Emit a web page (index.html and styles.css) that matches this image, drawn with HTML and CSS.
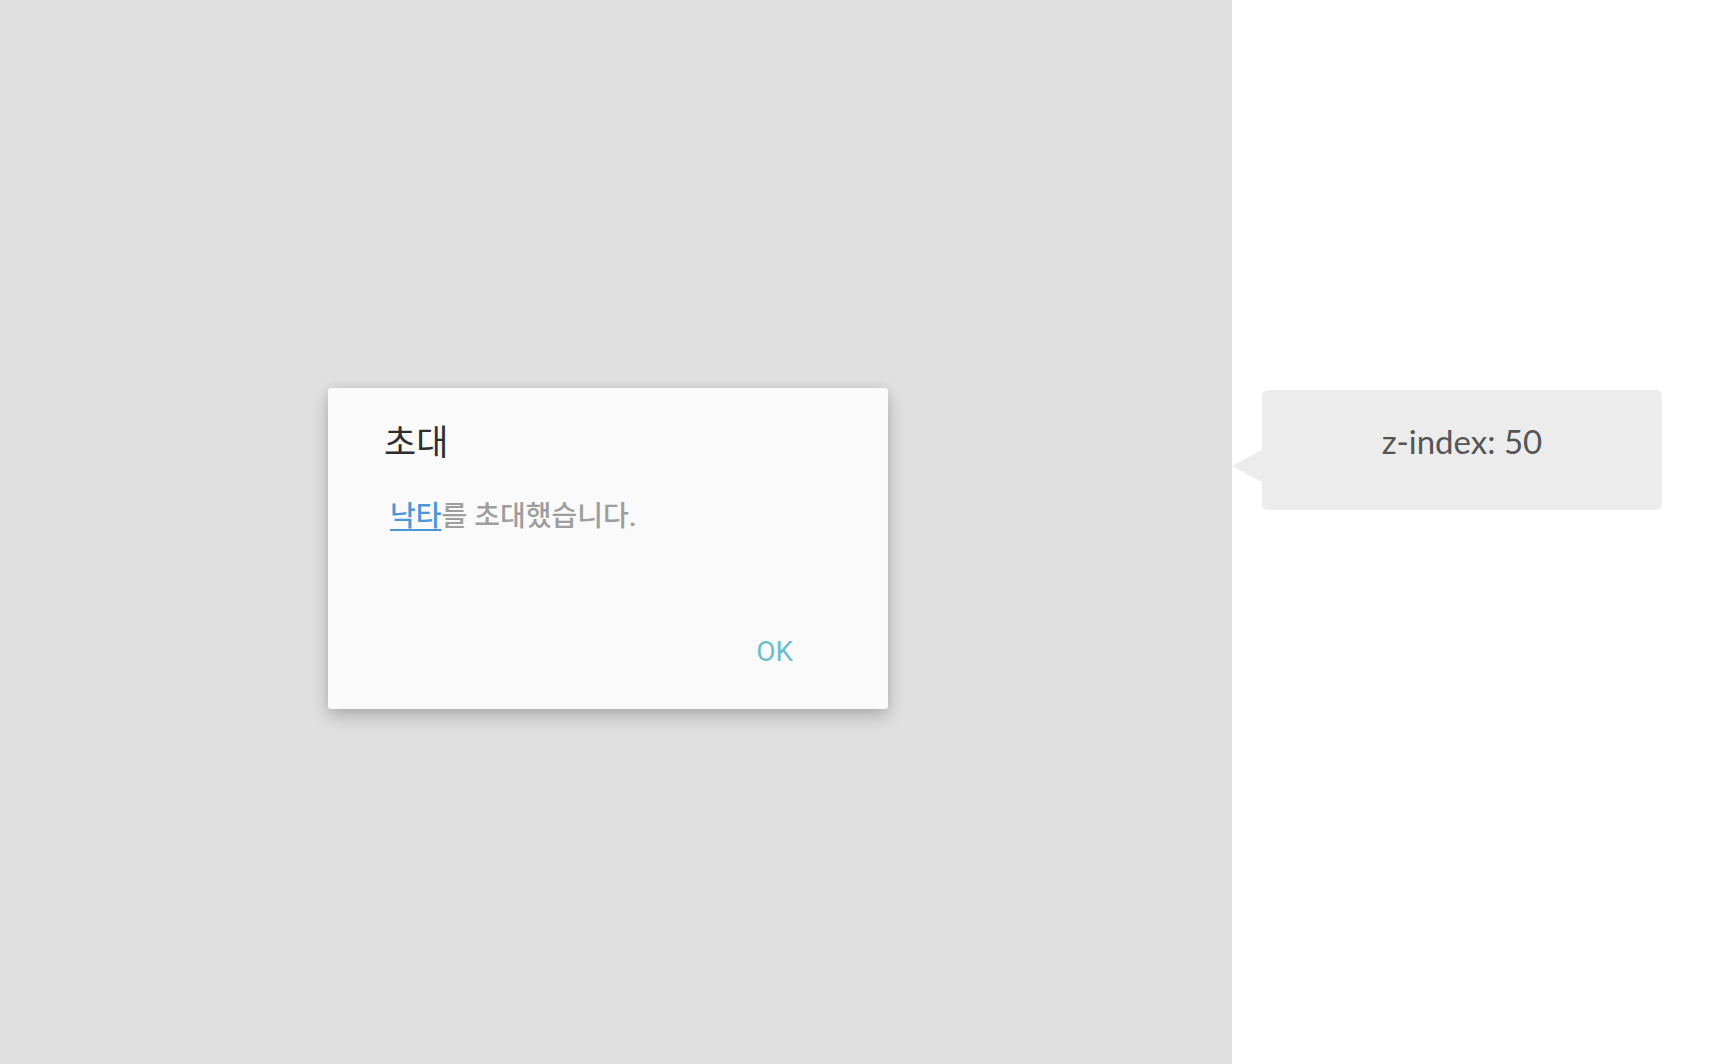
FILE: index.html
```html
<!DOCTYPE html>
<html lang="ko">
<head>
<meta charset="utf-8">
<title>초대</title>
<link rel="stylesheet" href="styles.css">
</head>
<body>
<div class="page">
  <div class="backdrop">
    <div class="dialog">
      <h2 class="dialog-title">초대</h2>
      <p class="dialog-message"><a class="dialog-link" href="#">낙타</a>를 초대했습니다.</p>
      <div class="dialog-actions">
        <button class="dialog-button" type="button">OK</button>
      </div>
    </div>
  </div>
  <div class="side">
    <div class="tip">z-index: 50</div>
  </div>
</div>
</body>
</html>
```
FILE: styles.css
```css
html, body {
  margin: 0;
  padding: 0;
  height: 100%;
  background: #ffffff;
}

.page {
  display: flex;
  height: 100vh;
  font-family: "Roboto", "Noto Sans CJK KR", sans-serif;
}

.backdrop {
  width: 1232px;
  flex: none;
  background: #e0e0e0;
  box-sizing: border-box;
  padding: 388px 0 0 328px;
}

.dialog {
  width: 560px;
  height: 321px;
  box-sizing: border-box;
  background: #fafafa;
  border-radius: 3px;
  box-shadow: 0 8px 18px rgba(0, 0, 0, 0.2), 0 0 10px rgba(0, 0, 0, 0.08);
  padding: 36px 0 0 56px;
  display: flex;
  flex-direction: column;
}

.dialog-title {
  margin: 0;
  font-family: "Roboto", "Noto Sans CJK KR", sans-serif;
  font-weight: 400;
  font-size: 35px;
  line-height: 40px;
  color: #2e2e2e;
}

.dialog-message {
  margin: 35px 0 0 6px;
  font-family: "Roboto", "Noto Sans CJK KR", sans-serif;
  font-weight: 500;
  font-size: 28px;
  line-height: 36px;
  color: #9e9e9e;
}

.dialog-link {
  color: #4b97d8;
  text-decoration: underline;
  text-underline-offset: 3px;
}

.dialog-actions {
  margin-top: auto;
  display: flex;
  justify-content: flex-end;
  padding: 0 80px 33px 0;
}

.dialog-button {
  border: 0;
  background: transparent;
  font-family: "Roboto", sans-serif;
  font-size: 28px;
  line-height: 36px;
  color: #6bbfcb;
  padding: 6px 15px;
  cursor: pointer;
}

.side {
  flex: 1;
  box-sizing: border-box;
  padding: 390px 0 0 30px;
}

.tip {
  position: relative;
  width: 400px;
  height: 120px;
  box-sizing: border-box;
  padding-top: 31px;
  background: #ececec;
  border-radius: 6px;
  text-align: center;
  font-family: "Lato", sans-serif;
  font-size: 33px;
  line-height: 40px;
  color: #555555;
}

.tip::before {
  content: "";
  position: absolute;
  left: -30px;
  top: 60px;
  border-top: 16px solid transparent;
  border-bottom: 16px solid transparent;
  border-right: 30px solid #ececec;
}
```
